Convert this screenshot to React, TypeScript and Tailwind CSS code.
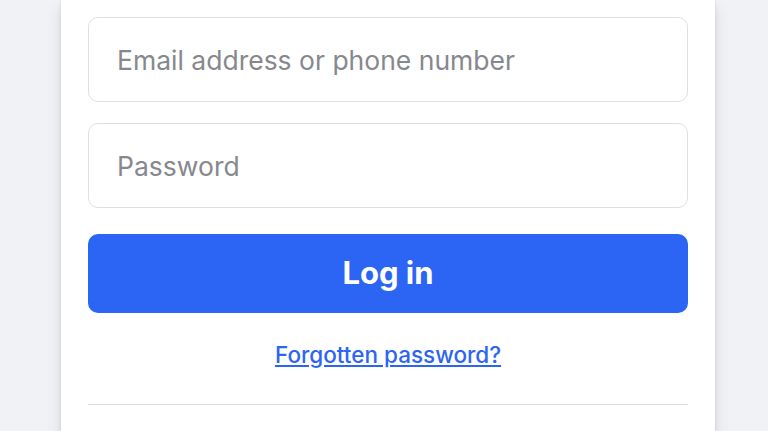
import React from 'react';

export default function App() {
  return (
    <div
      className="min-h-screen bg-[#f0f2f5] flex overflow-hidden pl-[61px]"
      style={{ fontFamily: 'Inter, "Noto Sans", sans-serif' }}
    >
      <div className="w-[654px] bg-white rounded-b-xl shadow-[0_2px_4px_rgba(0,0,0,0.1),0_8px_16px_rgba(0,0,0,0.1)] px-[27px] pt-[17px] pb-10 flex flex-col">
        <input
          type="text"
          placeholder="Email address or phone number"
          className="h-[85px] w-full rounded-[10px] border border-[#dddfe2] px-[28px] text-[26.5px] text-[#1c1e21] placeholder:text-[#86888e] outline-none"
        />
        <input
          type="password"
          placeholder="Password"
          className="mt-[21px] h-[85px] w-full rounded-[10px] border border-[#dddfe2] px-[28px] text-[26.5px] text-[#1c1e21] placeholder:text-[#86888e] outline-none"
        />
        <button className="mt-[26px] h-[79px] w-full rounded-[10px] bg-[#2c65f3] text-white text-[31px] font-bold">
          Log in
        </button>
        <div className="mt-[26px] text-center leading-[32px]">
          <a href="#" className="text-[#2c65f3] text-[22.5px] font-medium underline underline-offset-2">
            Forgotten password?
          </a>
        </div>
        <div className="mt-[31px] h-px bg-[#dadde1]" />
        <div className="h-20" />
      </div>
    </div>
  );
}
